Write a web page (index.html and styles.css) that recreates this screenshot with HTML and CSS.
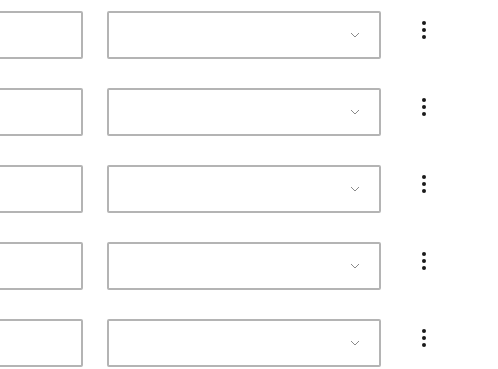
FILE: index.html
```html
<!DOCTYPE html>
<html lang="en">
<head>
  <meta charset="UTF-8">
  <title>Rows</title>
  <link rel="stylesheet" href="styles.css">
</head>
<body>
  <div class="list">
    <div class="row">
      <div class="field"></div>
      <div class="select">
        <svg class="chev" width="10" height="6" viewBox="0 0 10 6"><path d="M1 1 L5 5 L9 1" /></svg>
      </div>
      <div class="more"><span></span><span></span><span></span></div>
    </div>
    <div class="row">
      <div class="field"></div>
      <div class="select">
        <svg class="chev" width="10" height="6" viewBox="0 0 10 6"><path d="M1 1 L5 5 L9 1" /></svg>
      </div>
      <div class="more"><span></span><span></span><span></span></div>
    </div>
    <div class="row">
      <div class="field"></div>
      <div class="select">
        <svg class="chev" width="10" height="6" viewBox="0 0 10 6"><path d="M1 1 L5 5 L9 1" /></svg>
      </div>
      <div class="more"><span></span><span></span><span></span></div>
    </div>
    <div class="row">
      <div class="field"></div>
      <div class="select">
        <svg class="chev" width="10" height="6" viewBox="0 0 10 6"><path d="M1 1 L5 5 L9 1" /></svg>
      </div>
      <div class="more"><span></span><span></span><span></span></div>
    </div>
    <div class="row">
      <div class="field"></div>
      <div class="select">
        <svg class="chev" width="10" height="6" viewBox="0 0 10 6"><path d="M1 1 L5 5 L9 1" /></svg>
      </div>
      <div class="more"><span></span><span></span><span></span></div>
    </div>
  </div>
</body>
</html>
```

FILE: styles.css
```css
body { margin:0; background:#fff; font-family: 'Noto Sans', sans-serif; overflow:hidden; }
.list {
  display:flex; flex-direction:column; gap:29px;
  padding-top:11px; margin-left:-20px;
}
.row { display:flex; align-items:flex-start; height:48px; }
.field {
  width:99px; height:44px; flex:none;
  border:2px solid #b4b4b4; border-radius:2px;
}
.select {
  width:251px; height:44px; flex:none; margin-left:24px;
  border:2px solid #b4b4b4; border-radius:2px;
  display:flex; align-items:center; justify-content:flex-end;
  padding-right:19px;
}
.chev { display:block; }
.chev path { fill:none; stroke:#8a8a8a; stroke-width:1; }
.more {
  width:24px; margin-left:31px; padding-top:10px;
  display:flex; flex-direction:column; align-items:center; gap:3px;
}
.more span {
  width:4px; height:4px; border-radius:50%; background:#1a1a1a;
}
```
